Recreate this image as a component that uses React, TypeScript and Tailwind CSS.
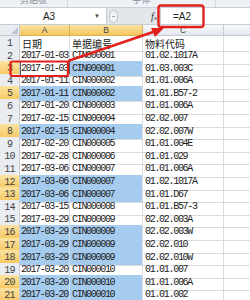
import React from "react";

type Row = [string, string, string, boolean];

const data: Row[] = [
  ["2017-01-03", "CIN000001", "01.02.1017A", false],
  ["2017-01-03", "CIN000001", "01.03.003C", true],
  ["2017-01-11", "CIN000002", "01.01.006A", false],
  ["2017-01-11", "CIN000002", "01.01.B57-2", true],
  ["2017-01-20", "CIN000003", "01.01.006A", false],
  ["2017-02-15", "CIN000004", "02.02.007", false],
  ["2017-02-15", "CIN000004", "02.02.007W", true],
  ["2017-02-20", "CIN000005", "01.01.004E", false],
  ["2017-02-28", "CIN000006", "01.01.029", false],
  ["2017-03-06", "CIN000007", "01.01.006A", false],
  ["2017-03-06", "CIN000007", "01.02.1017A", true],
  ["2017-03-06", "CIN000007", "01.01.D67", true],
  ["2017-03-15", "CIN000008", "01.01.B57-3", false],
  ["2017-03-29", "CIN000009", "02.02.003A", false],
  ["2017-03-29", "CIN000009", "02.02.003W", true],
  ["2017-03-29", "CIN000009", "02.02.010", true],
  ["2017-03-29", "CIN000009", "02.02.010W", true],
  ["2017-03-20", "CIN000010", "01.01.007", false],
  ["2017-03-20", "CIN000010", "01.01.006A", true],
  ["2017-03-20", "CIN000010", "01.01.002", true],
];

const mono = "font-['Liberation_Mono',monospace] text-[10px] tracking-[-1.3px]";
const cjk = "font-['Noto_Sans_CJK_SC',sans-serif] text-[10px] leading-none";
const grid = "grid grid-cols-[20px_50px_73px_81px_1fr]";

function RowHead({ n, sel }: { n: number; sel: boolean }) {
  return (
    <div
      className={`flex items-center justify-center border-r border-b border-[#c5ccd6] font-['Liberation_Mono',monospace] text-[10px] tracking-[-0.8px] text-[#444] ${
        sel ? "bg-gradient-to-b from-[#fbe3a0] to-[#f6c65a]" : "bg-[#e9edf2]"
      }`}
    >
      {n}
    </div>
  );
}

export default function App() {
  return (
    <div className="relative w-[250px] h-[300px] overflow-hidden bg-white text-[#222]">
      {/* ribbon group labels, cut off */}
      <div className="h-[8px] overflow-hidden bg-[#eef1f5] border-b border-[#c9d0da] flex text-[#8a8f96] text-[9px] font-['Noto_Sans_CJK_SC',sans-serif]">
        <div className="w-[68px] border-r border-[#d3d8df] flex justify-center">
          <span className="-mt-[7px] leading-[14px]">剪贴板</span>
        </div>
        <div className="w-[148px] border-r border-[#d3d8df] flex justify-center">
          <span className="-mt-[7px] leading-[14px]">字体</span>
        </div>
      </div>

      {/* formula bar */}
      <div className="h-[17px] flex bg-[#e3e7ec] border-b border-[#c5ccd6]">
        <div className="w-[107px] bg-white border-r border-[#c5ccd6] flex items-center">
          <span className="flex-1 text-center pl-[4px] font-['Liberation_Sans',sans-serif] text-[10px]">A3</span>
          <span className="w-[12px] text-[6px] text-[#444]">▼</span>
        </div>
        <div className="w-[53px] flex items-center">
          <div className="ml-[2px] w-[9px] h-[13px] rounded-full border border-[#b8c0cb] bg-[#f2f4f7] flex items-center justify-center">
            <div className="w-[3px] h-[1px] bg-[#9aa3ae]" />
          </div>
          <span className="ml-auto mr-[3px] font-['Liberation_Serif',serif] italic text-[10px] text-[#333]">f<span className="text-[7px]">x</span></span>
        </div>
        <div className="flex-1 bg-white border-l border-[#c5ccd6] flex items-center pl-[12px] font-['Liberation_Sans',sans-serif] text-[10px]">
          =A2
        </div>
      </div>

      {/* column header */}
      <div className={`${grid} h-[11px] text-[8.5px] leading-none font-['Liberation_Sans',sans-serif] text-[#444]`}>
        <div className="bg-[#e9edf2] border-r border-b border-[#c5ccd6] flex items-end justify-end p-[1px]">
          <div className="w-0 h-0 border-l-[7px] border-l-transparent border-b-[7px] border-b-[#bfc6cf]" />
        </div>
        <div className="bg-gradient-to-b from-[#fbe3a0] to-[#f6c65a] border-r border-b border-[#d9b25a] flex items-center justify-center">A</div>
        <div className="bg-gradient-to-b from-[#fbe3a0] to-[#f6c65a] border-r border-b border-[#d9b25a] flex items-center justify-center">B</div>
        <div className="bg-gradient-to-b from-[#f6f8fa] to-[#e4e8ee] border-r border-b border-[#c5ccd6] flex items-center justify-center">C</div>
        <div className="bg-gradient-to-b from-[#f6f8fa] to-[#e4e8ee] border-b border-[#c5ccd6]" />
      </div>

      {/* header row 1 */}
      <div className={`${grid} h-[12.6px]`}>
        <RowHead n={1} sel={false} />
        <div className={`border-r border-b border-[#dadcdf] ${cjk} flex items-center pl-[2px] whitespace-nowrap`}>日期</div>
        <div className={`border-r border-b border-[#dadcdf] ${cjk} flex items-center pl-[2px] whitespace-nowrap`}>单据编号</div>
        <div className={`border-r border-b border-[#dadcdf] ${cjk} flex items-center pl-[2px] whitespace-nowrap`}>物料代码</div>
        <div className="border-b border-[#dadcdf]" />
      </div>

      {data.map(([d, no, code, sel], i) => {
        const n = i + 2;
        const active = n === 3;
        const cell = `border-r border-b border-[#dadcdf] ${mono} leading-none flex items-center pl-[1px] whitespace-nowrap`;
        return (
          <div key={n} className={`${grid} h-[12.6px]`}>
            <RowHead n={n} sel={sel} />
            <div
              className={`${cell} ${
                active ? "bg-white outline outline-1 outline-[#555] -outline-offset-1" : sel ? "bg-[#a5ccef]" : ""
              }`}
            >
              {d}
            </div>
            <div className={`${cell} pl-[2px] ${sel ? "bg-[#a5ccef]" : ""}`}>{no}</div>
            <div className={`${cell} pl-[2px]`}>{code}</div>
            <div className="border-b border-[#dadcdf]" />
          </div>
        );
      })}

      {/* red annotations */}
      <svg className="absolute left-0 top-0 pointer-events-none" width="250" height="300" viewBox="0 0 250 300">
        <rect x="158.5" y="5.5" width="45" height="21.5" rx="2.5" fill="none" stroke="#e3211c" strokeWidth="2.4" />
        <rect x="10.5" y="61.5" width="57.5" height="14.5" rx="2" fill="none" stroke="#e3211c" strokeWidth="2.2" />
        <line x1="68" y1="61" x2="156" y2="31" stroke="#e3211c" strokeWidth="2.4" />
        <polygon points="164,28 151,28 155,37" fill="#e3211c" />
      </svg>
    </div>
  );
}
